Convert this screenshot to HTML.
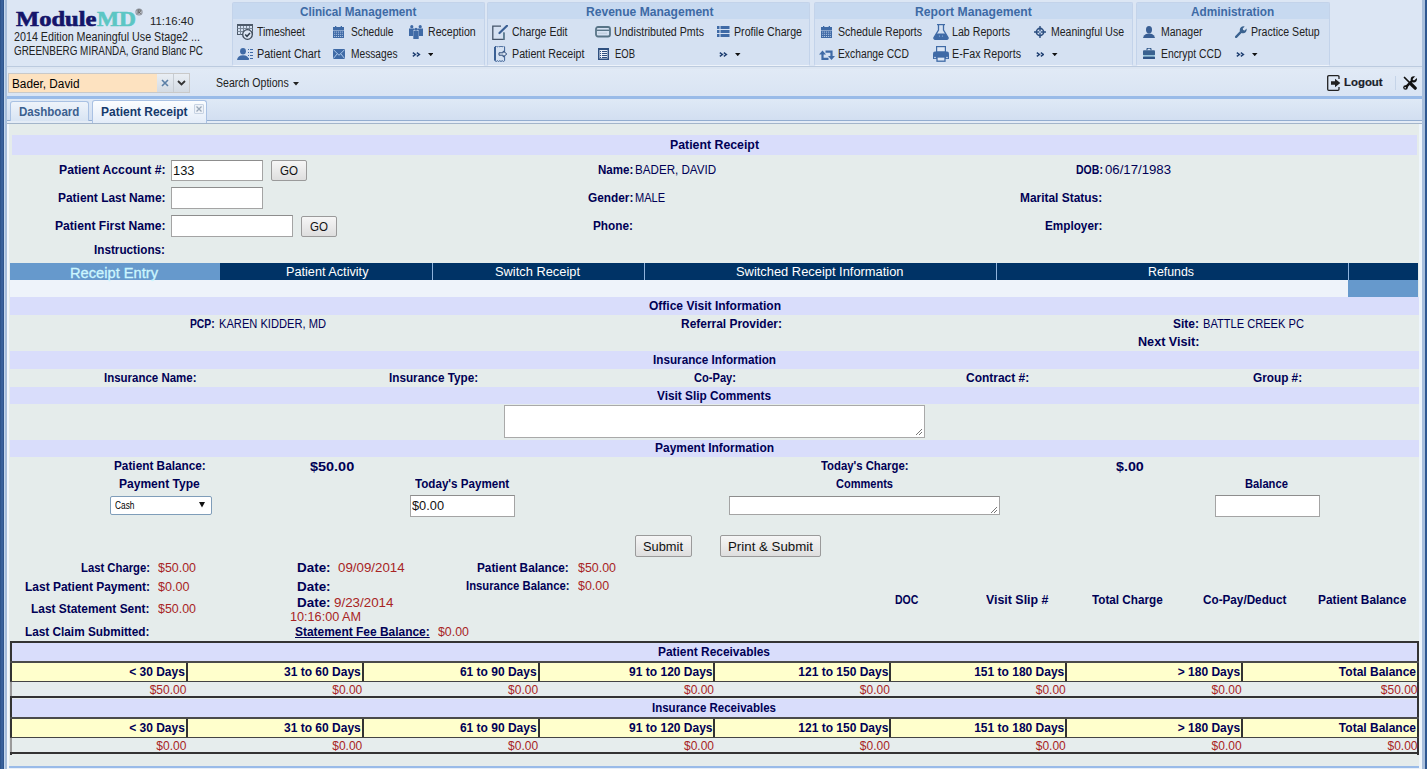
<!DOCTYPE html>
<html><head><meta charset="utf-8"><title>ModuleMD - Patient Receipt</title>
<style>html,body{margin:0;padding:0;}body{position:relative;width:1427px;height:769px;overflow:hidden;background:#dfe8f5;font-family:'Liberation Sans',sans-serif;}</style></head>
<body>
<div style="position:absolute;left:6px;top:0px;width:1416px;height:69px;background:#dce6f4;"></div>
<div style="position:absolute;left:6px;top:66px;width:1416px;height:1px;background:#bccbdf;"></div>
<div style="position:absolute;left:6px;top:67px;width:1416px;height:2px;background:#dde6f2;"></div>
<div style="position:absolute;left:6px;top:69px;width:1416px;height:27px;background:linear-gradient(#e1eaf6,#d9e4f3);"></div>
<div style="position:absolute;left:6px;top:96px;width:1416px;height:3px;background:#99bbe8;"></div>
<div style="position:absolute;left:6px;top:99px;width:1416px;height:21px;background:linear-gradient(#dfe9f6,#d2dff1);"></div>
<div style="position:absolute;left:6px;top:120px;width:1416px;height:1px;background:#94aed0;"></div>
<div style="position:absolute;left:6px;top:121px;width:1416px;height:2px;background:#e4ecf6;"></div>
<div style="position:absolute;left:6px;top:123px;width:1416px;height:1px;background:#a3b5ca;"></div>
<svg style="position:absolute;left:134.5px;top:7.5px" width="8" height="8" viewBox="0 0 8 8"><circle cx="4" cy="4" r="3.6" fill="#8a8f98"/><circle cx="4" cy="4" r="2.6" fill="#c8ccd4"/><path d="M3 6V2H4.5Q5.5 2 5.5 3T4.3 4L5.5 6M3 4H4.3" stroke="#555" stroke-width="0.9" fill="none"/></svg>
<div style="position:absolute;left:232px;top:2px;width:253px;height:64px;background:#d5e1f2;border:1px solid #c3d3ea;border-bottom-color:#eef3fa;box-sizing:border-box;border-radius:2px;"></div>
<div style="position:absolute;left:233px;top:3px;width:251px;height:16px;background:#c7d9f0;"></div>
<div style="position:absolute;left:487px;top:2px;width:323px;height:64px;background:#d5e1f2;border:1px solid #c3d3ea;border-bottom-color:#eef3fa;box-sizing:border-box;border-radius:2px;"></div>
<div style="position:absolute;left:488px;top:3px;width:321px;height:16px;background:#c7d9f0;"></div>
<div style="position:absolute;left:814px;top:2px;width:319px;height:64px;background:#d5e1f2;border:1px solid #c3d3ea;border-bottom-color:#eef3fa;box-sizing:border-box;border-radius:2px;"></div>
<div style="position:absolute;left:815px;top:3px;width:317px;height:16px;background:#c7d9f0;"></div>
<div style="position:absolute;left:1136px;top:2px;width:194px;height:64px;background:#d5e1f2;border:1px solid #c3d3ea;border-bottom-color:#eef3fa;box-sizing:border-box;border-radius:2px;"></div>
<div style="position:absolute;left:1137px;top:3px;width:192px;height:16px;background:#c7d9f0;"></div>
<svg style="position:absolute;left:237px;top:24px" width="16" height="16" viewBox="0 0 16 16" preserveAspectRatio="none"><g stroke="#4d5a6a" fill="none" stroke-width="1"><rect x="0.5" y="0.5" width="15" height="10"/><path d="M0.5 4.5H15.5M0.5 7.5H15.5M3.5 0.5V10.5M6.5 0.5V10.5M9.5 0.5V10.5M12.5 0.5V10.5" stroke="#7a8898"/></g><rect x="0" y="0" width="16" height="2" fill="#4d5a6a"/><circle cx="10.5" cy="10.5" r="4.8" fill="#dce6f4" stroke="#3f4b5a" stroke-width="1.3"/><path d="M8.2 10.5L10 12.3 13 9.1" stroke="#2f3b4a" stroke-width="1.5" fill="none"/></svg>
<svg style="position:absolute;left:333px;top:26px" width="11" height="12" viewBox="0 0 11 12" preserveAspectRatio="none"><rect x="0" y="1" width="11" height="3" fill="#3f6aa6"/><rect x="2" y="0" width="1.3" height="1.5" fill="#3f6aa6"/><rect x="7.7" y="0" width="1.3" height="1.5" fill="#3f6aa6"/><rect x="0" y="4.5" width="11" height="7.5" fill="#3f6aa6"/><rect x="1.2" y="5.6" width="1" height="1" fill="#b9cdea"/><rect x="1.2" y="7.8" width="1" height="1" fill="#b9cdea"/><rect x="1.2" y="10.0" width="1" height="1" fill="#b9cdea"/><rect x="3.0999999999999996" y="5.6" width="1" height="1" fill="#b9cdea"/><rect x="3.0999999999999996" y="7.8" width="1" height="1" fill="#b9cdea"/><rect x="3.0999999999999996" y="10.0" width="1" height="1" fill="#b9cdea"/><rect x="5.0" y="5.6" width="1" height="1" fill="#b9cdea"/><rect x="5.0" y="7.8" width="1" height="1" fill="#b9cdea"/><rect x="5.0" y="10.0" width="1" height="1" fill="#b9cdea"/><rect x="6.8999999999999995" y="5.6" width="1" height="1" fill="#b9cdea"/><rect x="6.8999999999999995" y="7.8" width="1" height="1" fill="#b9cdea"/><rect x="6.8999999999999995" y="10.0" width="1" height="1" fill="#b9cdea"/><rect x="8.799999999999999" y="5.6" width="1" height="1" fill="#b9cdea"/><rect x="8.799999999999999" y="7.8" width="1" height="1" fill="#b9cdea"/><rect x="8.799999999999999" y="10.0" width="1" height="1" fill="#b9cdea"/></svg>
<svg style="position:absolute;left:409px;top:25px" width="14" height="14" viewBox="0 0 14 14" preserveAspectRatio="none"><g fill="#3f6aa6"><circle cx="2.8" cy="1.7" r="1.6"/><circle cx="11.2" cy="1.7" r="1.6"/><path d="M0 3.5H5.5V5.5H4V11H0Z"/><path d="M14 3.5H8.5V5.5H10V11H14Z"/><circle cx="7" cy="4.3" r="1.5"/><rect x="4.3" y="6" width="5.4" height="8"/></g></svg>
<svg style="position:absolute;left:237px;top:48px" width="16" height="12" viewBox="0 0 16 12" preserveAspectRatio="none"><g fill="#3f6aa6"><ellipse cx="6" cy="3.3" rx="2.9" ry="3.3"/><path d="M0 12C0.4 8.8 2.5 7.2 6 7.2S11.6 8.8 12 12Z"/><rect x="11" y="1" width="1" height="1"/><rect x="13" y="1" width="3" height="1"/><rect x="11" y="4" width="1" height="1"/><rect x="13" y="4" width="3" height="1"/><rect x="11" y="7" width="1" height="1"/><rect x="13" y="7" width="3" height="1"/><rect x="11" y="10" width="1" height="1"/><rect x="13" y="10" width="3" height="1"/></g></svg>
<svg style="position:absolute;left:333px;top:49px" width="12" height="10" viewBox="0 0 12 10" preserveAspectRatio="none"><rect x="0" y="0" width="12" height="10" fill="#3f6aa6"/><path d="M0.3 0.5L6 6.3 11.7 0.5M0.3 9.6L4.2 4.8M11.7 9.6L7.8 4.8" stroke="#b9d3f0" stroke-width="0.9" fill="none"/></svg>
<svg style="position:absolute;left:412px;top:52px" width="8.5" height="5" viewBox="0 0 8.5 5"><path d="M0.8 0.6L3.4 2.5 0.8 4.4M4.8 0.6L7.4 2.5 4.8 4.4" stroke="#1f3f72" stroke-width="1.45" fill="none"/></svg>
<svg style="position:absolute;left:427.8px;top:53px" width="5.5" height="3.2" viewBox="0 0 5.5 3.2"><path d="M0 0H5.5L2.75 3.2Z" fill="#111"/></svg>
<svg style="position:absolute;left:492px;top:24.5px" width="16" height="15.5" viewBox="0 0 16 15.5" preserveAspectRatio="none"><path d="M9 1.2H0.8V14.5H12V7.5" fill="none" stroke="#44546a" stroke-width="1.3"/><path d="M7.5 8L15 0.8" stroke="#3a5f94" stroke-width="2.2" stroke-linecap="round"/><rect x="11" y="7.5" width="1.5" height="7" fill="#5f8196"/></svg>
<svg style="position:absolute;left:595px;top:26px" width="16" height="11.5" viewBox="0 0 16 11.5" preserveAspectRatio="none"><rect x="1" y="1" width="14" height="9.5" rx="2" fill="none" stroke="#587487" stroke-width="1.8"/><rect x="1.5" y="3.6" width="13" height="1.4" fill="#587487"/><rect x="3" y="6.8" width="9" height="0.6" fill="#aab8c8"/></svg>
<svg style="position:absolute;left:717px;top:26px" width="12.5" height="11" viewBox="0 0 12.5 11" preserveAspectRatio="none"><g fill="#3f6aa6"><rect x="0" y="0" width="2.5" height="3"/><rect x="3.5" y="0" width="9" height="3"/><rect x="0" y="4" width="2.5" height="3"/><rect x="3.5" y="4" width="9" height="3"/><rect x="0" y="8" width="2.5" height="3"/><rect x="3.5" y="8" width="9" height="3"/></g></svg>
<svg style="position:absolute;left:494px;top:46px" width="13.5" height="15.5" viewBox="0 0 13.5 15.5" preserveAspectRatio="none"><path d="M1 0.8L2.2 0 3.4 0.8 4.6 0 5.8 0.8 7 0 8.2 0.8 9.4 0 10.6 0.8V14.7L9.4 15.5 8.2 14.7 7 15.5 5.8 14.7 4.6 15.5 3.4 14.7 2.2 15.5 1 14.7Z" fill="none" stroke="#3a5f94" stroke-width="1"/><path d="M1 1V14.5" stroke="#3a5f94" stroke-width="2"/><path d="M5 6.8H9.2V5L12.8 8 9.2 11V9.2H5Z" fill="#dce6f4" stroke="#2c4a78" stroke-width="1"/></svg>
<svg style="position:absolute;left:598px;top:48px" width="11" height="12" viewBox="0 0 11 12" preserveAspectRatio="none"><rect x="0.75" y="0.75" width="9.5" height="10.5" fill="#eef3fa" stroke="#2f5080" stroke-width="1.5"/><rect x="0" y="0" width="11" height="2" fill="#2f5080"/><g fill="#2f5080"><rect x="2" y="3" width="1" height="1"/><rect x="4" y="3" width="5" height="1"/><rect x="2" y="5" width="1" height="1"/><rect x="4" y="5" width="5" height="1"/><rect x="2" y="7" width="1" height="1"/><rect x="4" y="7" width="5" height="1"/><rect x="2" y="9" width="1" height="1"/><rect x="4" y="9" width="5" height="1"/></g></svg>
<svg style="position:absolute;left:719px;top:52px" width="8.5" height="5" viewBox="0 0 8.5 5"><path d="M0.8 0.6L3.4 2.5 0.8 4.4M4.8 0.6L7.4 2.5 4.8 4.4" stroke="#1f3f72" stroke-width="1.45" fill="none"/></svg>
<svg style="position:absolute;left:735px;top:53px" width="5.5" height="3.2" viewBox="0 0 5.5 3.2"><path d="M0 0H5.5L2.75 3.2Z" fill="#111"/></svg>
<svg style="position:absolute;left:821px;top:26px" width="11" height="12" viewBox="0 0 11 12" preserveAspectRatio="none"><rect x="0" y="1" width="11" height="3" fill="#3f6aa6"/><rect x="2" y="0" width="1.3" height="1.5" fill="#3f6aa6"/><rect x="7.7" y="0" width="1.3" height="1.5" fill="#3f6aa6"/><rect x="0" y="4.5" width="11" height="7.5" fill="#3f6aa6"/><rect x="1.2" y="5.6" width="1" height="1" fill="#b9cdea"/><rect x="1.2" y="7.8" width="1" height="1" fill="#b9cdea"/><rect x="1.2" y="10.0" width="1" height="1" fill="#b9cdea"/><rect x="3.0999999999999996" y="5.6" width="1" height="1" fill="#b9cdea"/><rect x="3.0999999999999996" y="7.8" width="1" height="1" fill="#b9cdea"/><rect x="3.0999999999999996" y="10.0" width="1" height="1" fill="#b9cdea"/><rect x="5.0" y="5.6" width="1" height="1" fill="#b9cdea"/><rect x="5.0" y="7.8" width="1" height="1" fill="#b9cdea"/><rect x="5.0" y="10.0" width="1" height="1" fill="#b9cdea"/><rect x="6.8999999999999995" y="5.6" width="1" height="1" fill="#b9cdea"/><rect x="6.8999999999999995" y="7.8" width="1" height="1" fill="#b9cdea"/><rect x="6.8999999999999995" y="10.0" width="1" height="1" fill="#b9cdea"/><rect x="8.799999999999999" y="5.6" width="1" height="1" fill="#b9cdea"/><rect x="8.799999999999999" y="7.8" width="1" height="1" fill="#b9cdea"/><rect x="8.799999999999999" y="10.0" width="1" height="1" fill="#b9cdea"/></svg>
<svg style="position:absolute;left:933px;top:24px" width="16" height="16" viewBox="0 0 16 16" preserveAspectRatio="none"><rect x="4" y="0" width="8" height="1.2" fill="#3f6aa6"/><path d="M5.5 1V6L1 13.5Q0.5 15 2 15.3H14Q15.5 15 15 13.5L10.5 6V1" fill="none" stroke="#3f6aa6" stroke-width="1.3"/><path d="M3.5 9.5H12.5L15 13.5Q15.5 15 14 15.3H2Q0.5 15 1 13.5Z" fill="#3f6aa6"/><circle cx="6.5" cy="12" r="0.6" fill="#9fc0e8"/><circle cx="9.5" cy="12" r="0.6" fill="#9fc0e8"/></svg>
<svg style="position:absolute;left:1034px;top:26px" width="12" height="12" viewBox="0 0 12 12" preserveAspectRatio="none"><circle cx="6" cy="6" r="3.6" fill="none" stroke="#2d4f80" stroke-width="1.6"/><path d="M6 0V12M0 6H12" stroke="#2d4f80" stroke-width="1.4"/><circle cx="6" cy="6" r="1.2" fill="#9db8dc"/></svg>
<svg style="position:absolute;left:819px;top:49.5px" width="16" height="10.5" viewBox="0 0 16 10.5" preserveAspectRatio="none"><path d="M3.5 4V8.8H9.5M12.5 6.5V1.7H6.5" stroke="#3f6aa6" stroke-width="2.2" fill="none"/><path d="M0 4.5L3.5 0.5 7 4.5Z M9 6L12.5 10 16 6Z" fill="#3f6aa6"/></svg>
<svg style="position:absolute;left:933px;top:46px" width="16" height="16" viewBox="0 0 16 16" preserveAspectRatio="none"><rect x="3.6" y="0.6" width="8.8" height="5.5" fill="#dce6f4" stroke="#3f6aa6" stroke-width="1.2"/><path d="M0 7.5Q0 5.5 2 5.5H14Q16 5.5 16 7.5V13H0Z" fill="#3f6aa6"/><circle cx="2" cy="11.5" r="0.8" fill="#dce6f4"/><circle cx="14" cy="11.5" r="0.8" fill="#dce6f4"/><rect x="4" y="11" width="8" height="4.2" fill="#dce6f4" stroke="#3f6aa6" stroke-width="1.3"/></svg>
<svg style="position:absolute;left:1035.7px;top:52px" width="8.5" height="5" viewBox="0 0 8.5 5"><path d="M0.8 0.6L3.4 2.5 0.8 4.4M4.8 0.6L7.4 2.5 4.8 4.4" stroke="#1f3f72" stroke-width="1.45" fill="none"/></svg>
<svg style="position:absolute;left:1052px;top:53px" width="5.5" height="3.2" viewBox="0 0 5.5 3.2"><path d="M0 0H5.5L2.75 3.2Z" fill="#111"/></svg>
<svg style="position:absolute;left:1143px;top:26px" width="12" height="12" viewBox="0 0 12 12" preserveAspectRatio="none"><g fill="#3a5f94"><ellipse cx="6" cy="3.7" rx="3" ry="3.7"/><path d="M0 12L1 9.6Q2.5 7.6 6 7.6T11 9.6L12 12Z"/></g></svg>
<svg style="position:absolute;left:1234px;top:25.5px" width="12.5" height="12.5" viewBox="0 0 14 13.5" preserveAspectRatio="none"><path d="M1.5 10.8L6.6 5.7Q6 3 7.8 1.4T12 0.6L9.8 2.6 10.2 4.4 12 4.8 14 2.8Q14.6 5 13 6.7T8.4 7.6L3.3 12.6Q2.4 13.4 1.5 12.6T1.5 10.8Z" fill="#3a6290"/></svg>
<svg style="position:absolute;left:1143px;top:48px" width="12" height="11" viewBox="0 0 12 11" preserveAspectRatio="none"><path d="M4 2.2V1.2Q4 0.3 5 0.3H7Q8 0.3 8 1.2V2.2" fill="none" stroke="#2f5587" stroke-width="1.1"/><rect x="0" y="2.2" width="12" height="5.3" rx="1" fill="#3a6290"/><rect x="0" y="7.5" width="12" height="1.1" fill="#a8e6f0"/><rect x="0" y="8.6" width="12" height="2.4" rx="0.6" fill="#2f5587"/></svg>
<svg style="position:absolute;left:1236px;top:52px" width="8.5" height="5" viewBox="0 0 8.5 5"><path d="M0.8 0.6L3.4 2.5 0.8 4.4M4.8 0.6L7.4 2.5 4.8 4.4" stroke="#1f3f72" stroke-width="1.45" fill="none"/></svg>
<svg style="position:absolute;left:1252px;top:53px" width="5.5" height="3.2" viewBox="0 0 5.5 3.2"><path d="M0 0H5.5L2.75 3.2Z" fill="#111"/></svg>
<div style="position:absolute;left:8px;top:73px;width:182px;height:20px;background:#fde2c0;border:1px solid #c9c9c9;box-sizing:border-box;"></div>
<div style="position:absolute;left:157px;top:74px;width:16px;height:18px;background:linear-gradient(#e9eef4,#d4dbe3);"></div>
<div style="position:absolute;left:173px;top:74px;width:1px;height:18px;background:#c6ccd3;"></div>
<div style="position:absolute;left:174px;top:74px;width:15px;height:18px;background:linear-gradient(#e9eef4,#d4dbe3);"></div>
<svg style="position:absolute;left:161px;top:79px" width="8" height="8" viewBox="0 0 8 8"><path d="M1 1L7 7M7 1L1 7" stroke="#5b7fa6" stroke-width="1.6"/></svg>
<svg style="position:absolute;left:177px;top:80px" width="9" height="6" viewBox="0 0 9 6"><path d="M1 1L4.5 4.5L8 1" stroke="#333" stroke-width="1.8" fill="none"/></svg>
<svg style="position:absolute;left:293px;top:82px" width="6" height="4" viewBox="0 0 6 4"><path d="M0 0H6L3 3.5Z" fill="#222"/></svg>
<svg style="position:absolute;left:1326.5px;top:75px" width="14.0" height="16" viewBox="0 0 14 16" preserveAspectRatio="none"><path d="M12 4V1.8Q12 0.7 10.9 0.7H1.8Q0.7 0.7 0.7 1.8V14.2Q0.7 15.3 1.8 15.3H10.9Q12 15.3 12 14.2V12" fill="none" stroke="#222" stroke-width="1.3"/><path d="M4 6.2H8V3.8L13.3 8 8 12.2V9.8H4Z" fill="#222"/></svg>
<div style="position:absolute;left:1395px;top:76px;width:1px;height:14px;background:#c5d4e8;"></div>
<svg style="position:absolute;left:1403px;top:76px" width="14" height="14" viewBox="0 0 14 14" preserveAspectRatio="none"><path d="M1.5 1.5L7.5 7.5" stroke="#111" stroke-width="1.7" stroke-linecap="round"/><path d="M8.5 8.5L12.2 12.2" stroke="#111" stroke-width="3.2" stroke-linecap="round"/><path d="M2.4 11.6L9.8 4.2" stroke="#111" stroke-width="2.6" stroke-linecap="round"/><circle cx="10.8" cy="3.3" r="3.1" fill="#111"/><path d="M10.9 3.2L14.2 -0.1" stroke="#dde6f3" stroke-width="2.2" stroke-linecap="round"/><circle cx="2.5" cy="11.5" r="2.3" fill="#111"/><circle cx="2.2" cy="11.8" r="0.8" fill="#dde6f3"/></svg>
<div style="position:absolute;left:10px;top:101px;width:79px;height:20px;background:linear-gradient(#eef3fa,#d8e4f3);border:1px solid #a9c1e3;border-bottom:none;box-sizing:border-box;border-radius:3px 3px 0 0;"></div>
<div style="position:absolute;left:92px;top:100px;width:115px;height:23px;background:linear-gradient(#fbfdff,#e3ecf8);border:1px solid #a9c1e3;border-bottom:none;box-sizing:border-box;border-radius:3px 3px 0 0;"></div>
<div style="position:absolute;left:193.5px;top:104px;width:10.0px;height:9.5px;border:1px solid #c7d3e3;box-sizing:border-box;background:#eef2f8;border-radius:1px;"></div>
<svg style="position:absolute;left:195.5px;top:106px" width="6" height="6" viewBox="0 0 6 6"><path d="M0.5 0.5L5.5 5.5M5.5 0.5L0.5 5.5" stroke="#9aa8b8" stroke-width="1.3"/></svg>
<div style="position:absolute;left:6px;top:124px;width:1416px;height:645px;background:#e5eceb;"></div>
<div style="position:absolute;left:12px;top:135px;width:1405px;height:20px;background:#d9ddfb;"></div>
<div style="position:absolute;left:171px;top:160px;width:92px;height:21px;background:#fff;border:1px solid #a4a4a4;border-top-color:#8d8d8d;box-sizing:border-box;"></div>
<div style="position:absolute;left:271px;top:160px;width:36px;height:21px;background:linear-gradient(#f6f6f6,#dedede);border:1px solid #9a9a9a;border-radius:2px;box-sizing:border-box;"></div>
<div style="position:absolute;left:171px;top:187px;width:92px;height:22px;background:#fff;border:1px solid #a4a4a4;border-top-color:#8d8d8d;box-sizing:border-box;"></div>
<div style="position:absolute;left:171px;top:215px;width:122px;height:22px;background:#fff;border:1px solid #a4a4a4;border-top-color:#8d8d8d;box-sizing:border-box;"></div>
<div style="position:absolute;left:301px;top:216px;width:36px;height:21px;background:linear-gradient(#f6f6f6,#dedede);border:1px solid #9a9a9a;border-radius:2px;box-sizing:border-box;"></div>
<div style="position:absolute;left:10px;top:263px;width:1408px;height:17px;background:#003366;"></div>
<div style="position:absolute;left:10px;top:263px;width:210px;height:17px;background:#6699cc;"></div>
<div style="position:absolute;left:432px;top:263px;width:1px;height:17px;background:#8fb3dc;"></div>
<div style="position:absolute;left:643.5px;top:263px;width:1.0px;height:17px;background:#8fb3dc;"></div>
<div style="position:absolute;left:995.5px;top:263px;width:1.0px;height:17px;background:#8fb3dc;"></div>
<div style="position:absolute;left:1347.5px;top:263px;width:1.0px;height:17px;background:#8fb3dc;"></div>
<div style="position:absolute;left:10px;top:280px;width:1408px;height:17px;background:#eef3fa;"></div>
<div style="position:absolute;left:1348px;top:280px;width:70px;height:17px;background:#6699cc;"></div>
<div style="position:absolute;left:10px;top:297px;width:1409px;height:18px;background:#d9ddfb;"></div>
<div style="position:absolute;left:10px;top:351px;width:1409px;height:18px;background:#d9ddfb;"></div>
<div style="position:absolute;left:10px;top:387px;width:1409px;height:17px;background:#d9ddfb;"></div>
<div style="position:absolute;left:504px;top:405px;width:421px;height:33px;background:#fff;border:1px solid #a4a4a4;border-top-color:#8d8d8d;box-sizing:border-box;border-color:#a9a9a9;"></div>
<svg style="position:absolute;left:915px;top:428px" width="8" height="8" viewBox="0 0 8 8"><path d="M7 1L1 7M7 4L4 7" stroke="#777" stroke-width="1"/></svg>
<div style="position:absolute;left:10px;top:440px;width:1409px;height:17px;background:#d9ddfb;"></div>
<div style="position:absolute;left:110px;top:496px;width:102px;height:19px;background:#fff;border:1px solid #7f9db9;border-radius:2px;box-sizing:border-box;"></div>
<svg style="position:absolute;left:199px;top:502px" width="6" height="6" viewBox="0 0 6 6"><path d="M0 0H6L3 5.5Z" fill="#111"/></svg>
<div style="position:absolute;left:410px;top:495px;width:105px;height:22px;background:#fff;border:1px solid #a4a4a4;border-top-color:#8d8d8d;box-sizing:border-box;"></div>
<div style="position:absolute;left:729px;top:496px;width:271px;height:19px;background:#fff;border:1px solid #a4a4a4;border-top-color:#8d8d8d;box-sizing:border-box;"></div>
<svg style="position:absolute;left:990px;top:506px" width="8" height="8" viewBox="0 0 8 8"><path d="M7 1L1 7M7 4L4 7" stroke="#777" stroke-width="1"/></svg>
<div style="position:absolute;left:1215px;top:495px;width:105px;height:22px;background:#fff;border:1px solid #a4a4a4;border-top-color:#8d8d8d;box-sizing:border-box;"></div>
<div style="position:absolute;left:635px;top:535px;width:57px;height:22px;background:linear-gradient(#f6f6f6,#dedede);border:1px solid #9a9a9a;border-radius:2px;box-sizing:border-box;"></div>
<div style="position:absolute;left:720px;top:535px;width:101px;height:22px;background:linear-gradient(#f6f6f6,#dedede);border:1px solid #9a9a9a;border-radius:2px;box-sizing:border-box;"></div>
<div style="position:absolute;left:10px;top:641px;width:1409px;height:2px;background:#333;"></div>
<div style="position:absolute;left:10px;top:643px;width:1409px;height:56px;border-left:2px solid #333;border-right:2px solid #333;box-sizing:border-box;"></div>
<div style="position:absolute;left:12px;top:643px;width:1405px;height:18px;background:#d9ddfb;"></div>
<div style="position:absolute;left:10px;top:661px;width:1409px;height:1.5px;background:#4a4a4a;"></div>
<div style="position:absolute;left:12px;top:662.5px;width:1405px;height:18.5px;background:#ffffcc;"></div>
<div style="position:absolute;left:10px;top:681px;width:1409px;height:1px;background:#444;"></div>
<div style="position:absolute;left:12px;top:682px;width:1405px;height:14px;background:#e6eded;"></div>
<div style="position:absolute;left:10px;top:682px;width:2px;height:14px;background:#9a9a9a;"></div>
<div style="position:absolute;left:1417px;top:682px;width:2px;height:14px;background:#333;"></div>
<div style="position:absolute;left:10px;top:696px;width:1409px;height:2px;background:#333;"></div>
<div style="position:absolute;left:185.5px;top:662.5px;width:2.0px;height:18.5px;background:#333;"></div>
<div style="position:absolute;left:361.5px;top:662.5px;width:2.0px;height:18.5px;background:#333;"></div>
<div style="position:absolute;left:537.5px;top:662.5px;width:2.0px;height:18.5px;background:#333;"></div>
<div style="position:absolute;left:712.5px;top:662.5px;width:2.0px;height:18.5px;background:#333;"></div>
<div style="position:absolute;left:888.5px;top:662.5px;width:2.0px;height:18.5px;background:#333;"></div>
<div style="position:absolute;left:1064.5px;top:662.5px;width:2.0px;height:18.5px;background:#333;"></div>
<div style="position:absolute;left:1240.5px;top:662.5px;width:2.0px;height:18.5px;background:#333;"></div>
<div style="position:absolute;left:10px;top:699px;width:1409px;height:56px;border-left:2px solid #333;border-right:2px solid #333;box-sizing:border-box;"></div>
<div style="position:absolute;left:12px;top:699px;width:1405px;height:18px;background:#d9ddfb;"></div>
<div style="position:absolute;left:10px;top:717px;width:1409px;height:1.5px;background:#4a4a4a;"></div>
<div style="position:absolute;left:12px;top:718.5px;width:1405px;height:18.5px;background:#ffffcc;"></div>
<div style="position:absolute;left:10px;top:737px;width:1409px;height:1px;background:#444;"></div>
<div style="position:absolute;left:12px;top:738px;width:1405px;height:14px;background:#e6eded;"></div>
<div style="position:absolute;left:10px;top:738px;width:2px;height:14px;background:#9a9a9a;"></div>
<div style="position:absolute;left:1417px;top:738px;width:2px;height:14px;background:#333;"></div>
<div style="position:absolute;left:10px;top:752px;width:1409px;height:2px;background:#333;"></div>
<div style="position:absolute;left:185.5px;top:718.5px;width:2.0px;height:18.5px;background:#333;"></div>
<div style="position:absolute;left:361.5px;top:718.5px;width:2.0px;height:18.5px;background:#333;"></div>
<div style="position:absolute;left:537.5px;top:718.5px;width:2.0px;height:18.5px;background:#333;"></div>
<div style="position:absolute;left:712.5px;top:718.5px;width:2.0px;height:18.5px;background:#333;"></div>
<div style="position:absolute;left:888.5px;top:718.5px;width:2.0px;height:18.5px;background:#333;"></div>
<div style="position:absolute;left:1064.5px;top:718.5px;width:2.0px;height:18.5px;background:#333;"></div>
<div style="position:absolute;left:1240.5px;top:718.5px;width:2.0px;height:18.5px;background:#333;"></div>
<div style="position:absolute;left:6px;top:765.5px;width:1416px;height:2.0px;background:#99bbe8;"></div>
<div style="position:absolute;left:6px;top:767.5px;width:1416px;height:1.5px;background:#e8f0f8;"></div>
<div style="position:absolute;left:0px;top:0px;width:3.5px;height:769px;background:linear-gradient(90deg,#2a4f85,#3d67a3 50%,#2a4f85);"></div>
<div style="position:absolute;left:3.5px;top:0px;width:1.5px;height:769px;background:#c5d8ee;"></div>
<div style="position:absolute;left:5px;top:0px;width:2px;height:769px;background:#a7bedb;"></div>
<div style="position:absolute;left:7px;top:124px;width:1.5px;height:645px;background:#f2f7fc;"></div>
<div style="position:absolute;left:1419px;top:124px;width:3px;height:645px;background:#eef5fb;"></div>
<div style="position:absolute;left:1422px;top:0px;width:2.5px;height:769px;background:#a9bfdc;"></div>
<div style="position:absolute;left:1424.5px;top:0px;width:0.7999999999999545px;height:769px;background:#dfeaf5;"></div>
<div style="position:absolute;left:1425.3px;top:0px;width:1.7000000000000455px;height:769px;background:#2f5891;"></div>
<div class="t" style="position:absolute;left:15.50px;top:8.80px;font-family:'Liberation Serif',serif;font-size:20px;line-height:20px;white-space:nowrap;color:#15156a;font-weight:bold;transform:scaleX(1.2278);transform-origin:0 0;-webkit-text-stroke:0.6px #15156a;">Module</div>
<div class="t" style="position:absolute;left:97.00px;top:8.80px;font-family:'Liberation Serif',serif;font-size:20px;line-height:20px;white-space:nowrap;color:#5cc6c4;font-weight:bold;transform:scaleX(1.1702);transform-origin:0 0;-webkit-text-stroke:0.6px #5cc6c4;">MD</div>
<div class="t" style="position:absolute;left:150.00px;top:16.45px;font-family:'Liberation Sans',sans-serif;font-size:11px;line-height:11px;white-space:nowrap;color:#222;transform:scaleX(1.0353);transform-origin:0 0;">11:16:40</div>
<div class="t" style="position:absolute;left:13.50px;top:31.30px;font-family:'Liberation Sans',sans-serif;font-size:12px;line-height:12px;white-space:nowrap;color:#222;transform:scaleX(0.8936);transform-origin:0 0;">2014 Edition Meaningful Use Stage2 ...</div>
<div class="t" style="position:absolute;left:13.50px;top:44.80px;font-family:'Liberation Sans',sans-serif;font-size:12px;line-height:12px;white-space:nowrap;color:#222;transform:scaleX(0.8263);transform-origin:0 0;">GREENBERG MIRANDA, Grand Blanc PC</div>
<div class="t" style="position:absolute;left:299.60px;top:6.00px;font-family:'Liberation Sans',sans-serif;font-size:12px;line-height:12px;white-space:nowrap;color:#3d6aa5;font-weight:bold;transform:scaleX(0.9751);transform-origin:0 0;">Clinical Management</div>
<div class="t" style="position:absolute;left:585.50px;top:6.00px;font-family:'Liberation Sans',sans-serif;font-size:12px;line-height:12px;white-space:nowrap;color:#3d6aa5;font-weight:bold;transform:scaleX(1.0063);transform-origin:0 0;">Revenue Management</div>
<div class="t" style="position:absolute;left:915.20px;top:6.00px;font-family:'Liberation Sans',sans-serif;font-size:12px;line-height:12px;white-space:nowrap;color:#3d6aa5;font-weight:bold;transform:scaleX(1.0125);transform-origin:0 0;">Report Management</div>
<div class="t" style="position:absolute;left:1190.80px;top:6.00px;font-family:'Liberation Sans',sans-serif;font-size:12px;line-height:12px;white-space:nowrap;color:#3d6aa5;font-weight:bold;transform:scaleX(0.9826);transform-origin:0 0;">Administration</div>
<div class="t" style="position:absolute;left:257.00px;top:26.10px;font-family:'Liberation Sans',sans-serif;font-size:12px;line-height:12px;white-space:nowrap;color:#222;transform:scaleX(0.8636);transform-origin:0 0;">Timesheet</div>
<div class="t" style="position:absolute;left:350.50px;top:26.10px;font-family:'Liberation Sans',sans-serif;font-size:12px;line-height:12px;white-space:nowrap;color:#222;transform:scaleX(0.8492);transform-origin:0 0;">Schedule</div>
<div class="t" style="position:absolute;left:427.70px;top:26.10px;font-family:'Liberation Sans',sans-serif;font-size:12px;line-height:12px;white-space:nowrap;color:#222;transform:scaleX(0.8826);transform-origin:0 0;">Reception</div>
<div class="t" style="position:absolute;left:256.50px;top:48.10px;font-family:'Liberation Sans',sans-serif;font-size:12px;line-height:12px;white-space:nowrap;color:#222;transform:scaleX(0.9065);transform-origin:0 0;">Patient Chart</div>
<div class="t" style="position:absolute;left:350.50px;top:48.10px;font-family:'Liberation Sans',sans-serif;font-size:12px;line-height:12px;white-space:nowrap;color:#222;transform:scaleX(0.8500);transform-origin:0 0;">Messages</div>
<div class="t" style="position:absolute;left:511.50px;top:26.10px;font-family:'Liberation Sans',sans-serif;font-size:12px;line-height:12px;white-space:nowrap;color:#222;transform:scaleX(0.8757);transform-origin:0 0;">Charge Edit</div>
<div class="t" style="position:absolute;left:614.00px;top:26.10px;font-family:'Liberation Sans',sans-serif;font-size:12px;line-height:12px;white-space:nowrap;color:#222;transform:scaleX(0.8878);transform-origin:0 0;">Undistributed Pmts</div>
<div class="t" style="position:absolute;left:734.00px;top:26.10px;font-family:'Liberation Sans',sans-serif;font-size:12px;line-height:12px;white-space:nowrap;color:#222;transform:scaleX(0.8864);transform-origin:0 0;">Profile Charge</div>
<div class="t" style="position:absolute;left:511.50px;top:47.70px;font-family:'Liberation Sans',sans-serif;font-size:12px;line-height:12px;white-space:nowrap;color:#222;transform:scaleX(0.8908);transform-origin:0 0;">Patient Receipt</div>
<div class="t" style="position:absolute;left:614.50px;top:47.70px;font-family:'Liberation Sans',sans-serif;font-size:12px;line-height:12px;white-space:nowrap;color:#222;transform:scaleX(0.7891);transform-origin:0 0;">EOB</div>
<div class="t" style="position:absolute;left:838.00px;top:26.10px;font-family:'Liberation Sans',sans-serif;font-size:12px;line-height:12px;white-space:nowrap;color:#222;transform:scaleX(0.8806);transform-origin:0 0;">Schedule Reports</div>
<div class="t" style="position:absolute;left:952.00px;top:26.10px;font-family:'Liberation Sans',sans-serif;font-size:12px;line-height:12px;white-space:nowrap;color:#222;transform:scaleX(0.8872);transform-origin:0 0;">Lab Reports</div>
<div class="t" style="position:absolute;left:1051.00px;top:26.10px;font-family:'Liberation Sans',sans-serif;font-size:12px;line-height:12px;white-space:nowrap;color:#222;transform:scaleX(0.8754);transform-origin:0 0;">Meaningful Use</div>
<div class="t" style="position:absolute;left:838.00px;top:48.10px;font-family:'Liberation Sans',sans-serif;font-size:12px;line-height:12px;white-space:nowrap;color:#222;transform:scaleX(0.8583);transform-origin:0 0;">Exchange CCD</div>
<div class="t" style="position:absolute;left:952.00px;top:48.10px;font-family:'Liberation Sans',sans-serif;font-size:12px;line-height:12px;white-space:nowrap;color:#222;transform:scaleX(0.8919);transform-origin:0 0;">E-Fax Reports</div>
<div class="t" style="position:absolute;left:1160.50px;top:26.10px;font-family:'Liberation Sans',sans-serif;font-size:12px;line-height:12px;white-space:nowrap;color:#222;transform:scaleX(0.8760);transform-origin:0 0;">Manager</div>
<div class="t" style="position:absolute;left:1251.30px;top:26.10px;font-family:'Liberation Sans',sans-serif;font-size:12px;line-height:12px;white-space:nowrap;color:#222;transform:scaleX(0.8802);transform-origin:0 0;">Practice Setup</div>
<div class="t" style="position:absolute;left:1160.50px;top:48.10px;font-family:'Liberation Sans',sans-serif;font-size:12px;line-height:12px;white-space:nowrap;color:#222;transform:scaleX(0.8641);transform-origin:0 0;">Encrypt CCD</div>
<div class="t" style="position:absolute;left:11.50px;top:77.80px;font-family:'Liberation Sans',sans-serif;font-size:12px;line-height:12px;white-space:nowrap;color:#000;transform:scaleX(0.9823);transform-origin:0 0;">Bader, David</div>
<div class="t" style="position:absolute;left:216.30px;top:76.80px;font-family:'Liberation Sans',sans-serif;font-size:12px;line-height:12px;white-space:nowrap;color:#222;transform:scaleX(0.8789);transform-origin:0 0;">Search Options</div>
<div class="t" style="position:absolute;left:1344.40px;top:77.35px;font-family:'Liberation Sans',sans-serif;font-size:11px;line-height:11px;white-space:nowrap;color:#1a1f2a;font-weight:bold;transform:scaleX(1.0358);transform-origin:0 0;-webkit-text-stroke:0.2px #1a1f2a;">Logout</div>
<div class="t" style="position:absolute;left:18.60px;top:105.60px;font-family:'Liberation Sans',sans-serif;font-size:12px;line-height:12px;white-space:nowrap;color:#3c5f8f;font-weight:bold;transform:scaleX(0.9635);transform-origin:0 0;">Dashboard</div>
<div class="t" style="position:absolute;left:101.40px;top:105.60px;font-family:'Liberation Sans',sans-serif;font-size:12px;line-height:12px;white-space:nowrap;color:#15396b;font-weight:bold;transform:scaleX(0.9988);transform-origin:0 0;">Patient Receipt</div>
<div class="t" style="position:absolute;left:670.00px;top:139.10px;font-family:'Liberation Sans',sans-serif;font-size:12px;line-height:12px;white-space:nowrap;color:#000055;font-weight:bold;transform:scaleX(1.0265);transform-origin:0 0;">Patient Receipt</div>
<div class="t" style="position:absolute;left:58.50px;top:163.80px;font-family:'Liberation Sans',sans-serif;font-size:12px;line-height:12px;white-space:nowrap;color:#000055;font-weight:bold;transform:scaleX(1.0152);transform-origin:0 0;">Patient Account #:</div>
<div class="t" style="position:absolute;left:172.50px;top:163.95px;font-family:'Liberation Sans',sans-serif;font-size:13px;line-height:13px;white-space:nowrap;color:#111;transform:scaleX(0.9906);transform-origin:0 0;">133</div>
<div class="t" style="position:absolute;left:280.00px;top:164.25px;font-family:'Liberation Sans',sans-serif;font-size:13px;line-height:13px;white-space:nowrap;color:#111;transform:scaleX(0.8896);transform-origin:0 0;">GO</div>
<div class="t" style="position:absolute;left:57.50px;top:191.80px;font-family:'Liberation Sans',sans-serif;font-size:12px;line-height:12px;white-space:nowrap;color:#000055;font-weight:bold;transform:scaleX(0.9951);transform-origin:0 0;">Patient Last Name:</div>
<div class="t" style="position:absolute;left:54.50px;top:219.80px;font-family:'Liberation Sans',sans-serif;font-size:12px;line-height:12px;white-space:nowrap;color:#000055;font-weight:bold;transform:scaleX(1.0104);transform-origin:0 0;">Patient First Name:</div>
<div class="t" style="position:absolute;left:309.50px;top:219.75px;font-family:'Liberation Sans',sans-serif;font-size:13px;line-height:13px;white-space:nowrap;color:#111;transform:scaleX(0.8896);transform-origin:0 0;">GO</div>
<div class="t" style="position:absolute;left:94.00px;top:244.30px;font-family:'Liberation Sans',sans-serif;font-size:12px;line-height:12px;white-space:nowrap;color:#000055;font-weight:bold;transform:scaleX(0.9770);transform-origin:0 0;">Instructions:</div>
<div class="t" style="position:absolute;left:597.70px;top:163.80px;font-family:'Liberation Sans',sans-serif;font-size:12px;line-height:12px;white-space:nowrap;color:#000055;font-weight:bold;transform:scaleX(0.9622);transform-origin:0 0;">Name:</div>
<div class="t" style="position:absolute;left:635.40px;top:163.80px;font-family:'Liberation Sans',sans-serif;font-size:12px;line-height:12px;white-space:nowrap;color:#000055;transform:scaleX(0.9678);transform-origin:0 0;">BADER, DAVID</div>
<div class="t" style="position:absolute;left:587.60px;top:191.80px;font-family:'Liberation Sans',sans-serif;font-size:12px;line-height:12px;white-space:nowrap;color:#000055;font-weight:bold;transform:scaleX(0.9866);transform-origin:0 0;">Gender:</div>
<div class="t" style="position:absolute;left:635.40px;top:191.80px;font-family:'Liberation Sans',sans-serif;font-size:12px;line-height:12px;white-space:nowrap;color:#000055;transform:scaleX(0.9208);transform-origin:0 0;">MALE</div>
<div class="t" style="position:absolute;left:593.00px;top:219.80px;font-family:'Liberation Sans',sans-serif;font-size:12px;line-height:12px;white-space:nowrap;color:#000055;font-weight:bold;transform:scaleX(0.9835);transform-origin:0 0;">Phone:</div>
<div class="t" style="position:absolute;left:1075.50px;top:163.80px;font-family:'Liberation Sans',sans-serif;font-size:12px;line-height:12px;white-space:nowrap;color:#000055;font-weight:bold;transform:scaleX(0.8770);transform-origin:0 0;">DOB:</div>
<div class="t" style="position:absolute;left:1105.00px;top:163.80px;font-family:'Liberation Sans',sans-serif;font-size:12px;line-height:12px;white-space:nowrap;color:#000055;transform:scaleX(1.0989);transform-origin:0 0;">06/17/1983</div>
<div class="t" style="position:absolute;left:1020.30px;top:191.80px;font-family:'Liberation Sans',sans-serif;font-size:12px;line-height:12px;white-space:nowrap;color:#000055;font-weight:bold;transform:scaleX(0.9929);transform-origin:0 0;">Marital Status:</div>
<div class="t" style="position:absolute;left:1045.00px;top:219.80px;font-family:'Liberation Sans',sans-serif;font-size:12px;line-height:12px;white-space:nowrap;color:#000055;font-weight:bold;transform:scaleX(0.9781);transform-origin:0 0;">Employer:</div>
<div class="t" style="position:absolute;left:70.00px;top:266.10px;font-family:'Liberation Sans',sans-serif;font-size:14px;line-height:14px;white-space:nowrap;color:#ccf6ff;transform:scaleX(1.0470);transform-origin:0 0;-webkit-text-stroke:0.3px #ccf6ff;">Receipt Entry</div>
<div class="t" style="position:absolute;left:285.50px;top:266.10px;font-family:'Liberation Sans',sans-serif;font-size:12px;line-height:12px;white-space:nowrap;color:#fff;transform:scaleX(1.0571);transform-origin:0 0;">Patient Activity</div>
<div class="t" style="position:absolute;left:495.00px;top:266.10px;font-family:'Liberation Sans',sans-serif;font-size:12px;line-height:12px;white-space:nowrap;color:#fff;transform:scaleX(1.0709);transform-origin:0 0;">Switch Receipt</div>
<div class="t" style="position:absolute;left:735.50px;top:266.10px;font-family:'Liberation Sans',sans-serif;font-size:12px;line-height:12px;white-space:nowrap;color:#fff;transform:scaleX(1.0732);transform-origin:0 0;">Switched Receipt Information</div>
<div class="t" style="position:absolute;left:1148.00px;top:266.10px;font-family:'Liberation Sans',sans-serif;font-size:12px;line-height:12px;white-space:nowrap;color:#fff;transform:scaleX(1.0290);transform-origin:0 0;">Refunds</div>
<div class="t" style="position:absolute;left:649.00px;top:299.80px;font-family:'Liberation Sans',sans-serif;font-size:12px;line-height:12px;white-space:nowrap;color:#000055;font-weight:bold;transform:scaleX(1.0015);transform-origin:0 0;">Office Visit Information</div>
<div class="t" style="position:absolute;left:190.40px;top:318.30px;font-family:'Liberation Sans',sans-serif;font-size:12px;line-height:12px;white-space:nowrap;color:#000055;font-weight:bold;transform:scaleX(0.8580);transform-origin:0 0;">PCP:</div>
<div class="t" style="position:absolute;left:219.00px;top:318.30px;font-family:'Liberation Sans',sans-serif;font-size:12px;line-height:12px;white-space:nowrap;color:#000055;transform:scaleX(0.9275);transform-origin:0 0;">KAREN KIDDER, MD</div>
<div class="t" style="position:absolute;left:680.80px;top:318.30px;font-family:'Liberation Sans',sans-serif;font-size:12px;line-height:12px;white-space:nowrap;color:#000055;font-weight:bold;transform:scaleX(0.9953);transform-origin:0 0;">Referral Provider:</div>
<div class="t" style="position:absolute;left:1173.40px;top:318.30px;font-family:'Liberation Sans',sans-serif;font-size:12px;line-height:12px;white-space:nowrap;color:#000055;font-weight:bold;transform:scaleX(0.9956);transform-origin:0 0;">Site:</div>
<div class="t" style="position:absolute;left:1203.30px;top:318.30px;font-family:'Liberation Sans',sans-serif;font-size:12px;line-height:12px;white-space:nowrap;color:#000055;transform:scaleX(0.9245);transform-origin:0 0;">BATTLE CREEK PC</div>
<div class="t" style="position:absolute;left:1138.00px;top:335.80px;font-family:'Liberation Sans',sans-serif;font-size:12px;line-height:12px;white-space:nowrap;color:#000055;font-weight:bold;transform:scaleX(1.0518);transform-origin:0 0;">Next Visit:</div>
<div class="t" style="position:absolute;left:653.00px;top:353.80px;font-family:'Liberation Sans',sans-serif;font-size:12px;line-height:12px;white-space:nowrap;color:#000055;font-weight:bold;transform:scaleX(0.9759);transform-origin:0 0;">Insurance Information</div>
<div class="t" style="position:absolute;left:104.30px;top:372.30px;font-family:'Liberation Sans',sans-serif;font-size:12px;line-height:12px;white-space:nowrap;color:#000055;font-weight:bold;transform:scaleX(0.9565);transform-origin:0 0;">Insurance Name:</div>
<div class="t" style="position:absolute;left:388.50px;top:372.30px;font-family:'Liberation Sans',sans-serif;font-size:12px;line-height:12px;white-space:nowrap;color:#000055;font-weight:bold;transform:scaleX(0.9776);transform-origin:0 0;">Insurance Type:</div>
<div class="t" style="position:absolute;left:693.60px;top:372.30px;font-family:'Liberation Sans',sans-serif;font-size:12px;line-height:12px;white-space:nowrap;color:#000055;font-weight:bold;transform:scaleX(0.9263);transform-origin:0 0;">Co-Pay:</div>
<div class="t" style="position:absolute;left:965.50px;top:372.30px;font-family:'Liberation Sans',sans-serif;font-size:12px;line-height:12px;white-space:nowrap;color:#000055;font-weight:bold;transform:scaleX(0.9977);transform-origin:0 0;">Contract #:</div>
<div class="t" style="position:absolute;left:1253.40px;top:372.30px;font-family:'Liberation Sans',sans-serif;font-size:12px;line-height:12px;white-space:nowrap;color:#000055;font-weight:bold;transform:scaleX(0.9820);transform-origin:0 0;">Group #:</div>
<div class="t" style="position:absolute;left:657.00px;top:389.80px;font-family:'Liberation Sans',sans-serif;font-size:12px;line-height:12px;white-space:nowrap;color:#000055;font-weight:bold;transform:scaleX(0.9843);transform-origin:0 0;">Visit Slip Comments</div>
<div class="t" style="position:absolute;left:655.00px;top:442.30px;font-family:'Liberation Sans',sans-serif;font-size:12px;line-height:12px;white-space:nowrap;color:#000055;font-weight:bold;transform:scaleX(0.9970);transform-origin:0 0;">Payment Information</div>
<div class="t" style="position:absolute;left:114.40px;top:459.80px;font-family:'Liberation Sans',sans-serif;font-size:12px;line-height:12px;white-space:nowrap;color:#000055;font-weight:bold;transform:scaleX(0.9831);transform-origin:0 0;">Patient Balance:</div>
<div class="t" style="position:absolute;left:310.00px;top:459.95px;font-family:'Liberation Sans',sans-serif;font-size:13px;line-height:13px;white-space:nowrap;color:#000055;font-weight:bold;transform:scaleX(1.1115);transform-origin:0 0;">$50.00</div>
<div class="t" style="position:absolute;left:821.00px;top:459.80px;font-family:'Liberation Sans',sans-serif;font-size:12px;line-height:12px;white-space:nowrap;color:#000055;font-weight:bold;transform:scaleX(0.9444);transform-origin:0 0;">Today's Charge:</div>
<div class="t" style="position:absolute;left:1115.50px;top:459.95px;font-family:'Liberation Sans',sans-serif;font-size:13px;line-height:13px;white-space:nowrap;color:#000055;font-weight:bold;transform:scaleX(1.0983);transform-origin:0 0;">$.00</div>
<div class="t" style="position:absolute;left:119.40px;top:478.30px;font-family:'Liberation Sans',sans-serif;font-size:12px;line-height:12px;white-space:nowrap;color:#000055;font-weight:bold;transform:scaleX(1.0027);transform-origin:0 0;">Payment Type</div>
<div class="t" style="position:absolute;left:415.10px;top:478.30px;font-family:'Liberation Sans',sans-serif;font-size:12px;line-height:12px;white-space:nowrap;color:#000055;font-weight:bold;transform:scaleX(0.9677);transform-origin:0 0;">Today's Payment</div>
<div class="t" style="position:absolute;left:836.00px;top:478.30px;font-family:'Liberation Sans',sans-serif;font-size:12px;line-height:12px;white-space:nowrap;color:#000055;font-weight:bold;transform:scaleX(0.9191);transform-origin:0 0;">Comments</div>
<div class="t" style="position:absolute;left:1245.40px;top:478.30px;font-family:'Liberation Sans',sans-serif;font-size:12px;line-height:12px;white-space:nowrap;color:#000055;font-weight:bold;transform:scaleX(0.9320);transform-origin:0 0;">Balance</div>
<div class="t" style="position:absolute;left:114.50px;top:501.00px;font-family:'Liberation Sans',sans-serif;font-size:10px;line-height:10px;white-space:nowrap;color:#000;transform:scaleX(0.8348);transform-origin:0 0;">Cash</div>
<div class="t" style="position:absolute;left:412.00px;top:499.45px;font-family:'Liberation Sans',sans-serif;font-size:13px;line-height:13px;white-space:nowrap;color:#111;transform:scaleX(0.9832);transform-origin:0 0;">$0.00</div>
<div class="t" style="position:absolute;left:643.00px;top:540.45px;font-family:'Liberation Sans',sans-serif;font-size:13px;line-height:13px;white-space:nowrap;color:#111;transform:scaleX(0.9884);transform-origin:0 0;">Submit</div>
<div class="t" style="position:absolute;left:727.50px;top:540.45px;font-family:'Liberation Sans',sans-serif;font-size:13px;line-height:13px;white-space:nowrap;color:#111;transform:scaleX(1.0229);transform-origin:0 0;">Print &amp; Submit</div>
<div class="t" style="position:absolute;left:80.70px;top:562.30px;font-family:'Liberation Sans',sans-serif;font-size:12px;line-height:12px;white-space:nowrap;color:#000055;font-weight:bold;transform:scaleX(0.9406);transform-origin:0 0;">Last Charge:</div>
<div class="t" style="position:absolute;left:158.00px;top:562.30px;font-family:'Liberation Sans',sans-serif;font-size:12px;line-height:12px;white-space:nowrap;color:#a82424;transform:scaleX(1.0353);transform-origin:0 0;">$50.00</div>
<div class="t" style="position:absolute;left:24.60px;top:580.80px;font-family:'Liberation Sans',sans-serif;font-size:12px;line-height:12px;white-space:nowrap;color:#000055;font-weight:bold;transform:scaleX(0.9978);transform-origin:0 0;">Last Patient Payment:</div>
<div class="t" style="position:absolute;left:158.00px;top:580.80px;font-family:'Liberation Sans',sans-serif;font-size:12px;line-height:12px;white-space:nowrap;color:#a82424;transform:scaleX(1.0489);transform-origin:0 0;">$0.00</div>
<div class="t" style="position:absolute;left:31.30px;top:602.80px;font-family:'Liberation Sans',sans-serif;font-size:12px;line-height:12px;white-space:nowrap;color:#000055;font-weight:bold;transform:scaleX(0.9920);transform-origin:0 0;">Last Statement Sent:</div>
<div class="t" style="position:absolute;left:158.00px;top:602.80px;font-family:'Liberation Sans',sans-serif;font-size:12px;line-height:12px;white-space:nowrap;color:#a82424;transform:scaleX(1.0353);transform-origin:0 0;">$50.00</div>
<div class="t" style="position:absolute;left:25.20px;top:626.30px;font-family:'Liberation Sans',sans-serif;font-size:12px;line-height:12px;white-space:nowrap;color:#000055;font-weight:bold;transform:scaleX(0.9827);transform-origin:0 0;">Last Claim Submitted:</div>
<div class="t" style="position:absolute;left:297.00px;top:562.30px;font-family:'Liberation Sans',sans-serif;font-size:12px;line-height:12px;white-space:nowrap;color:#000055;font-weight:bold;transform:scaleX(1.1194);transform-origin:0 0;">Date:</div>
<div class="t" style="position:absolute;left:338.00px;top:562.30px;font-family:'Liberation Sans',sans-serif;font-size:12px;line-height:12px;white-space:nowrap;color:#a82424;transform:scaleX(1.1088);transform-origin:0 0;">09/09/2014</div>
<div class="t" style="position:absolute;left:297.00px;top:580.80px;font-family:'Liberation Sans',sans-serif;font-size:12px;line-height:12px;white-space:nowrap;color:#000055;font-weight:bold;transform:scaleX(1.1194);transform-origin:0 0;">Date:</div>
<div class="t" style="position:absolute;left:297.00px;top:596.80px;font-family:'Liberation Sans',sans-serif;font-size:12px;line-height:12px;white-space:nowrap;color:#000055;font-weight:bold;transform:scaleX(1.1194);transform-origin:0 0;">Date:</div>
<div class="t" style="position:absolute;left:334.00px;top:596.80px;font-family:'Liberation Sans',sans-serif;font-size:12px;line-height:12px;white-space:nowrap;color:#a82424;transform:scaleX(1.1144);transform-origin:0 0;">9/23/2014</div>
<div class="t" style="position:absolute;left:290.00px;top:610.80px;font-family:'Liberation Sans',sans-serif;font-size:12px;line-height:12px;white-space:nowrap;color:#a82424;transform:scaleX(1.0536);transform-origin:0 0;">10:16:00 AM</div>
<div class="t" style="position:absolute;left:295.30px;top:626.30px;font-family:'Liberation Sans',sans-serif;font-size:12px;line-height:12px;white-space:nowrap;color:#000055;font-weight:bold;transform:scaleX(0.9949);transform-origin:0 0;text-decoration:underline;">Statement Fee Balance:</div>
<div class="t" style="position:absolute;left:438.30px;top:626.30px;font-family:'Liberation Sans',sans-serif;font-size:12px;line-height:12px;white-space:nowrap;color:#a82424;transform:scaleX(1.0289);transform-origin:0 0;">$0.00</div>
<div class="t" style="position:absolute;left:477.40px;top:561.80px;font-family:'Liberation Sans',sans-serif;font-size:12px;line-height:12px;white-space:nowrap;color:#000055;font-weight:bold;transform:scaleX(0.9831);transform-origin:0 0;">Patient Balance:</div>
<div class="t" style="position:absolute;left:578.30px;top:561.80px;font-family:'Liberation Sans',sans-serif;font-size:12px;line-height:12px;white-space:nowrap;color:#a82424;transform:scaleX(1.0353);transform-origin:0 0;">$50.00</div>
<div class="t" style="position:absolute;left:465.60px;top:580.30px;font-family:'Liberation Sans',sans-serif;font-size:12px;line-height:12px;white-space:nowrap;color:#000055;font-weight:bold;transform:scaleX(0.9414);transform-origin:0 0;">Insurance Balance:</div>
<div class="t" style="position:absolute;left:578.30px;top:580.30px;font-family:'Liberation Sans',sans-serif;font-size:12px;line-height:12px;white-space:nowrap;color:#a82424;transform:scaleX(1.0389);transform-origin:0 0;">$0.00</div>
<div class="t" style="position:absolute;left:895.00px;top:593.80px;font-family:'Liberation Sans',sans-serif;font-size:12px;line-height:12px;white-space:nowrap;color:#000055;font-weight:bold;transform:scaleX(0.8773);transform-origin:0 0;">DOC</div>
<div class="t" style="position:absolute;left:986.30px;top:593.80px;font-family:'Liberation Sans',sans-serif;font-size:12px;line-height:12px;white-space:nowrap;color:#000055;font-weight:bold;transform:scaleX(1.0319);transform-origin:0 0;">Visit Slip #</div>
<div class="t" style="position:absolute;left:1092.40px;top:593.80px;font-family:'Liberation Sans',sans-serif;font-size:12px;line-height:12px;white-space:nowrap;color:#000055;font-weight:bold;transform:scaleX(0.9758);transform-origin:0 0;">Total Charge</div>
<div class="t" style="position:absolute;left:1202.90px;top:593.80px;font-family:'Liberation Sans',sans-serif;font-size:12px;line-height:12px;white-space:nowrap;color:#000055;font-weight:bold;transform:scaleX(0.9770);transform-origin:0 0;">Co-Pay/Deduct</div>
<div class="t" style="position:absolute;left:1318.00px;top:593.80px;font-family:'Liberation Sans',sans-serif;font-size:12px;line-height:12px;white-space:nowrap;color:#000055;font-weight:bold;transform:scaleX(0.9880);transform-origin:0 0;">Patient Balance</div>
<div class="t" style="position:absolute;left:658.00px;top:646.30px;font-family:'Liberation Sans',sans-serif;font-size:12px;line-height:12px;white-space:nowrap;color:#000055;font-weight:bold;transform:scaleX(0.9935);transform-origin:0 0;">Patient Receivables</div>
<div class="t" style="position:absolute;left:129.16px;top:666.30px;font-family:'Liberation Sans',sans-serif;font-size:12px;line-height:12px;white-space:nowrap;color:#000055;font-weight:bold;">&lt; 30 Days</div>
<div class="t" style="position:absolute;left:284.03px;top:666.30px;font-family:'Liberation Sans',sans-serif;font-size:12px;line-height:12px;white-space:nowrap;color:#000055;font-weight:bold;">31 to 60 Days</div>
<div class="t" style="position:absolute;left:459.91px;top:666.30px;font-family:'Liberation Sans',sans-serif;font-size:12px;line-height:12px;white-space:nowrap;color:#000055;font-weight:bold;">61 to 90 Days</div>
<div class="t" style="position:absolute;left:629.11px;top:666.30px;font-family:'Liberation Sans',sans-serif;font-size:12px;line-height:12px;white-space:nowrap;color:#000055;font-weight:bold;">91 to 120 Days</div>
<div class="t" style="position:absolute;left:798.31px;top:666.30px;font-family:'Liberation Sans',sans-serif;font-size:12px;line-height:12px;white-space:nowrap;color:#000055;font-weight:bold;">121 to 150 Days</div>
<div class="t" style="position:absolute;left:974.19px;top:666.30px;font-family:'Liberation Sans',sans-serif;font-size:12px;line-height:12px;white-space:nowrap;color:#000055;font-weight:bold;">151 to 180 Days</div>
<div class="t" style="position:absolute;left:1177.73px;top:666.30px;font-family:'Liberation Sans',sans-serif;font-size:12px;line-height:12px;white-space:nowrap;color:#000055;font-weight:bold;">&gt; 180 Days</div>
<div class="t" style="position:absolute;left:1338.86px;top:666.30px;font-family:'Liberation Sans',sans-serif;font-size:12px;line-height:12px;white-space:nowrap;color:#000055;font-weight:bold;">Total Balance</div>
<div class="t" style="position:absolute;left:149.67px;top:683.80px;font-family:'Liberation Sans',sans-serif;font-size:12px;line-height:12px;white-space:nowrap;color:#a82424;">$50.00</div>
<div class="t" style="position:absolute;left:332.22px;top:683.80px;font-family:'Liberation Sans',sans-serif;font-size:12px;line-height:12px;white-space:nowrap;color:#a82424;">$0.00</div>
<div class="t" style="position:absolute;left:508.09px;top:683.80px;font-family:'Liberation Sans',sans-serif;font-size:12px;line-height:12px;white-space:nowrap;color:#a82424;">$0.00</div>
<div class="t" style="position:absolute;left:683.97px;top:683.80px;font-family:'Liberation Sans',sans-serif;font-size:12px;line-height:12px;white-space:nowrap;color:#a82424;">$0.00</div>
<div class="t" style="position:absolute;left:859.84px;top:683.80px;font-family:'Liberation Sans',sans-serif;font-size:12px;line-height:12px;white-space:nowrap;color:#a82424;">$0.00</div>
<div class="t" style="position:absolute;left:1035.72px;top:683.80px;font-family:'Liberation Sans',sans-serif;font-size:12px;line-height:12px;white-space:nowrap;color:#a82424;">$0.00</div>
<div class="t" style="position:absolute;left:1211.59px;top:683.80px;font-family:'Liberation Sans',sans-serif;font-size:12px;line-height:12px;white-space:nowrap;color:#a82424;">$0.00</div>
<div class="t" style="position:absolute;left:1380.80px;top:683.80px;font-family:'Liberation Sans',sans-serif;font-size:12px;line-height:12px;white-space:nowrap;color:#a82424;">$50.00</div>
<div class="t" style="position:absolute;left:652.00px;top:702.30px;font-family:'Liberation Sans',sans-serif;font-size:12px;line-height:12px;white-space:nowrap;color:#000055;font-weight:bold;transform:scaleX(0.9582);transform-origin:0 0;">Insurance Receivables</div>
<div class="t" style="position:absolute;left:129.16px;top:722.30px;font-family:'Liberation Sans',sans-serif;font-size:12px;line-height:12px;white-space:nowrap;color:#000055;font-weight:bold;">&lt; 30 Days</div>
<div class="t" style="position:absolute;left:284.03px;top:722.30px;font-family:'Liberation Sans',sans-serif;font-size:12px;line-height:12px;white-space:nowrap;color:#000055;font-weight:bold;">31 to 60 Days</div>
<div class="t" style="position:absolute;left:459.91px;top:722.30px;font-family:'Liberation Sans',sans-serif;font-size:12px;line-height:12px;white-space:nowrap;color:#000055;font-weight:bold;">61 to 90 Days</div>
<div class="t" style="position:absolute;left:629.11px;top:722.30px;font-family:'Liberation Sans',sans-serif;font-size:12px;line-height:12px;white-space:nowrap;color:#000055;font-weight:bold;">91 to 120 Days</div>
<div class="t" style="position:absolute;left:798.31px;top:722.30px;font-family:'Liberation Sans',sans-serif;font-size:12px;line-height:12px;white-space:nowrap;color:#000055;font-weight:bold;">121 to 150 Days</div>
<div class="t" style="position:absolute;left:974.19px;top:722.30px;font-family:'Liberation Sans',sans-serif;font-size:12px;line-height:12px;white-space:nowrap;color:#000055;font-weight:bold;">151 to 180 Days</div>
<div class="t" style="position:absolute;left:1177.73px;top:722.30px;font-family:'Liberation Sans',sans-serif;font-size:12px;line-height:12px;white-space:nowrap;color:#000055;font-weight:bold;">&gt; 180 Days</div>
<div class="t" style="position:absolute;left:1338.86px;top:722.30px;font-family:'Liberation Sans',sans-serif;font-size:12px;line-height:12px;white-space:nowrap;color:#000055;font-weight:bold;">Total Balance</div>
<div class="t" style="position:absolute;left:156.34px;top:739.80px;font-family:'Liberation Sans',sans-serif;font-size:12px;line-height:12px;white-space:nowrap;color:#a82424;">$0.00</div>
<div class="t" style="position:absolute;left:332.22px;top:739.80px;font-family:'Liberation Sans',sans-serif;font-size:12px;line-height:12px;white-space:nowrap;color:#a82424;">$0.00</div>
<div class="t" style="position:absolute;left:508.09px;top:739.80px;font-family:'Liberation Sans',sans-serif;font-size:12px;line-height:12px;white-space:nowrap;color:#a82424;">$0.00</div>
<div class="t" style="position:absolute;left:683.97px;top:739.80px;font-family:'Liberation Sans',sans-serif;font-size:12px;line-height:12px;white-space:nowrap;color:#a82424;">$0.00</div>
<div class="t" style="position:absolute;left:859.84px;top:739.80px;font-family:'Liberation Sans',sans-serif;font-size:12px;line-height:12px;white-space:nowrap;color:#a82424;">$0.00</div>
<div class="t" style="position:absolute;left:1035.72px;top:739.80px;font-family:'Liberation Sans',sans-serif;font-size:12px;line-height:12px;white-space:nowrap;color:#a82424;">$0.00</div>
<div class="t" style="position:absolute;left:1211.59px;top:739.80px;font-family:'Liberation Sans',sans-serif;font-size:12px;line-height:12px;white-space:nowrap;color:#a82424;">$0.00</div>
<div class="t" style="position:absolute;left:1387.47px;top:739.80px;font-family:'Liberation Sans',sans-serif;font-size:12px;line-height:12px;white-space:nowrap;color:#a82424;">$0.00</div>
</body></html>
